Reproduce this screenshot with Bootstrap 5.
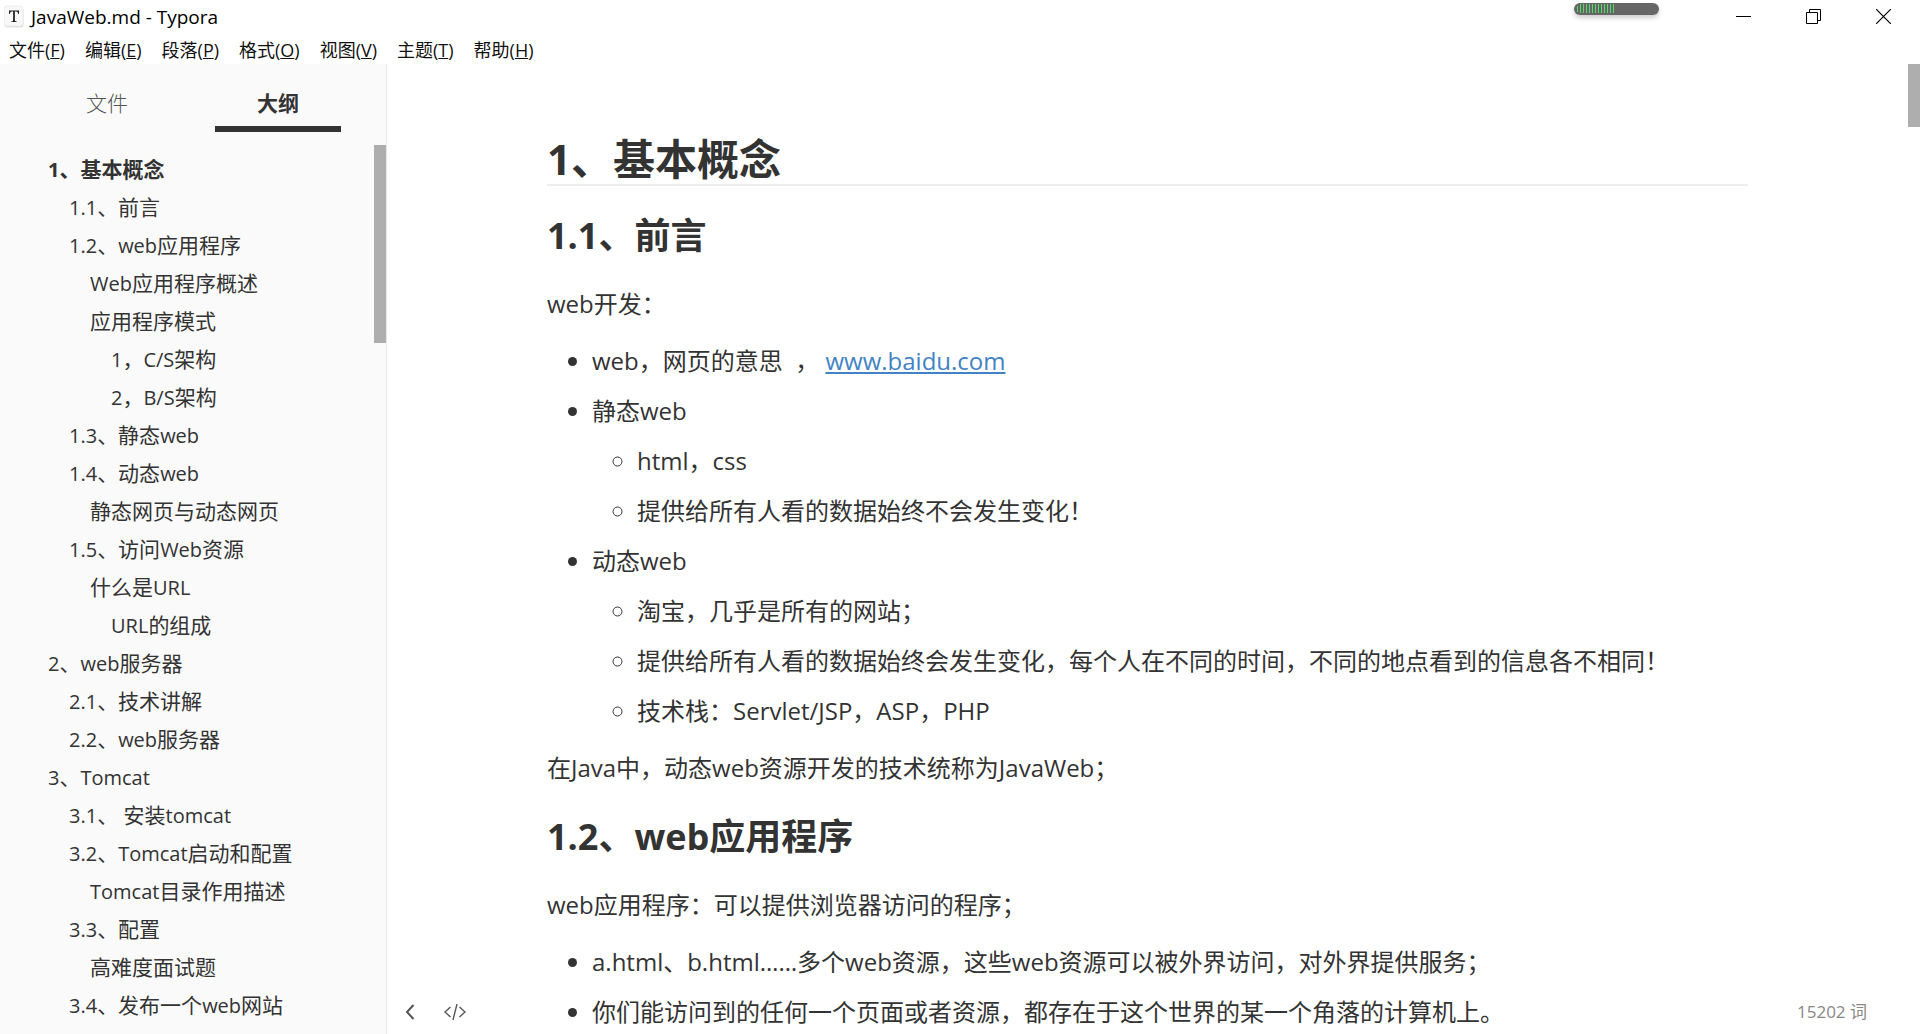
<!DOCTYPE html>
<html lang="zh-CN">
<head>
<meta charset="utf-8">
<meta name="viewport" content="width=device-width, initial-scale=1">
<title>JavaWeb.md - Typora</title>
<link href="https://cdn.jsdelivr.net/npm/bootstrap@5.3.0/dist/css/bootstrap.min.css" rel="stylesheet">
<style>
  body { font-family: "Open Sans", "Noto Sans CJK SC", sans-serif; color: #333; background: #fff; }
  .title-bar { height: 34px; color: #000; padding-right: 2px; }
  .title-text { font-size: 19px; line-height: 34px; margin-left: 6px; }
  .win-btn { width: 70px; height: 32px; border: 0; background: none; padding: 0; color: #000; }
  .win-btn svg, .foot-btn svg { display: block; margin: auto; }
  .battery { top: 3px; right: 261px; width: 85px; height: 12px; border-radius: 6px; background: #666; box-shadow: 0 3px 5px rgba(0,0,0,.2); }
  .battery svg { display: block; }
  .menu-bar { height: 30px; padding-left: 9px; gap: 20px; }
  .menu-bar button { border: 0; background: none; padding: 0; font-size: 18px; line-height: 32px; color: #111; }
  .side { width: 387px; background: #fafafa; border-right: 1px solid #e7e7e7; }
  .side-tabs { height: 68px; padding: 0 45px 0 44px; justify-content: space-between; }
  .side-tabs button { width: 126px; border: 0; border-bottom: 6px solid transparent; background: none; padding: 17px 0 0; font-size: 21px; color: #555; font-weight: 300; }
  .side-tabs button.active { border-color: #333; color: #333; font-weight: 700; }
  .outline { padding: 18px 20px 0 48px; font-size: 21px; line-height: 38px; white-space: nowrap; }
  .outline a { display: block; height: 38px; color: #333; text-decoration: none; }
  .outline a.active { font-weight: 700; }
  .outline .latin { font-size: 20px; }
  .lv2 { padding-left: 21px; }
  .lv3 { padding-left: 42px; }
  .lv4 { padding-left: 63px; }
  .thumb { width: 12px; background: #aeaeae; right: 0; }
  .thumb-side { top: 81px; height: 198px; }
  .thumb-main { top: 0; height: 63px; }
  .page { max-width: 1201px; margin: 0 auto; padding-top: 70px; font-size: 24px; line-height: 38px; }
  .scroller { padding-right: 12px; }
  .page h1 { font-size: 42px; line-height: 50px; font-weight: 700; border-bottom: 2px solid #eee; margin: 0 0 27px; }
  .page h2 { font-size: 36px; line-height: 45px; font-weight: 700; margin: 27px 0; }
  .page p { margin: 19px 0; }
  .page ul { margin: 19px 0; padding-left: 45px; }
  .page ul ul, .page li + li { margin: 12px 0 0; }
  .page a { color: #4183c4; }
  .foot-left { left: 0; bottom: 0; height: 44px; }
  .foot-btn { width: 45px; height: 44px; border: 0; background: none; padding: 0; color: #555; }
  .foot-count { right: 53px; bottom: 0; font-size: 17px; line-height: 44px; color: #888; border: 0; background: none; padding: 0; }
</style>
<script src="https://cdn.jsdelivr.net/npm/bootstrap@5.3.0/dist/js/bootstrap.bundle.min.js"></script>
</head>
<body>
<div class="d-flex flex-column vh-100 overflow-hidden">
  <header class="position-relative">
    <div class="title-bar d-flex">
      <svg class="ms-1 mt-1" width="21" height="26" viewBox="0 -2 21 26" aria-hidden="true">
        <rect x="0.500" y="1.500" width="19" height="20" rx="3" fill="#ddd"/>
        <rect x="0" y="0" width="19" height="20" rx="3" fill="#f8f8f8" stroke="#ececec"/>
        <path d="M5 4.500h10v3.500h-.8c-.3-1.700-.7-2.600-2-2.600H10.900v8.800c0 .8.400 1 1.700 1.100v.7H7.400v-.7c1.300-.1 1.700-.3 1.700-1.100V5.400H7.800c-1.300 0-1.700.9-2 2.600H5z" fill="#222"/>
      </svg>
      <span class="title-text">JavaWeb.md - Typora</span>
      <div class="d-flex ms-auto">
        <button class="win-btn" aria-label="最小化"><svg width="15" height="15"><path d="M0 7.500h15" stroke="#000"/></svg></button>
        <button class="win-btn" aria-label="还原"><svg width="15" height="15" fill="none" stroke="#000"><path d="M.5 3.500h11v11H.5zM3.500 3.500v-3h11v11h-3"/></svg></button>
        <button class="win-btn" aria-label="关闭"><svg width="15" height="15"><path d="M0 0l15 15M15 0L0 15" stroke="#000" stroke-width="1.200"/></svg></button>
      </div>
    </div>
    <div class="battery position-absolute">
      <svg width="85" height="12"><path d="M3.500 3v6M6.500 1v9M9.500 1v9M12.500 1v9M15.500 1v9M18.500 1v9M21.500 1v9M24.500 1v9M27.500 1v9M30.500 1v9M33.500 1v9M36.500 1v9M39.500 1v9" stroke="#4fdc68"/></svg>
    </div>
    <nav class="menu-bar d-flex">
      <button>文件(<u>F</u>)</button>
      <button>编辑(<u>E</u>)</button>
      <button>段落(<u>P</u>)</button>
      <button>格式(<u>O</u>)</button>
      <button>视图(<u>V</u>)</button>
      <button>主题(<u>T</u>)</button>
      <button>帮助(<u>H</u>)</button>
    </nav>
  </header>
  <div class="d-flex flex-grow-1 overflow-hidden">
    <aside class="side position-relative flex-shrink-0 overflow-hidden">
      <div class="side-tabs d-flex">
        <button>文件</button>
        <button class="active">大纲</button>
      </div>
      <nav class="outline">
        <a href="#s1" class="active"><span class="latin">1</span>、基本概念</a>
        <a href="#s11" class="lv2"><span class="latin">1.1</span>、前言</a>
        <a href="#s12" class="lv2"><span class="latin">1.2</span>、<span class="latin">web</span>应用程序</a>
        <a href="#" class="lv3"><span class="latin">Web</span>应用程序概述</a>
        <a href="#" class="lv3">应用程序模式</a>
        <a href="#" class="lv4"><span class="latin">1</span>，<span class="latin">C/S</span>架构</a>
        <a href="#" class="lv4"><span class="latin">2</span>，<span class="latin">B/S</span>架构</a>
        <a href="#" class="lv2"><span class="latin">1.3</span>、静态<span class="latin">web</span></a>
        <a href="#" class="lv2"><span class="latin">1.4</span>、动态<span class="latin">web</span></a>
        <a href="#" class="lv3">静态网页与动态网页</a>
        <a href="#" class="lv2"><span class="latin">1.5</span>、访问<span class="latin">Web</span>资源</a>
        <a href="#" class="lv3">什么是<span class="latin">URL</span></a>
        <a href="#" class="lv4"><span class="latin">URL</span>的组成</a>
        <a href="#"><span class="latin">2</span>、<span class="latin">web</span>服务器</a>
        <a href="#" class="lv2"><span class="latin">2.1</span>、技术讲解</a>
        <a href="#" class="lv2"><span class="latin">2.2</span>、<span class="latin">web</span>服务器</a>
        <a href="#"><span class="latin">3</span>、<span class="latin">Tomcat</span></a>
        <a href="#" class="lv2"><span class="latin">3.1</span>、 安装<span class="latin">tomcat</span></a>
        <a href="#" class="lv2"><span class="latin">3.2</span>、<span class="latin">Tomcat</span>启动和配置</a>
        <a href="#" class="lv3"><span class="latin">Tomcat</span>目录作用描述</a>
        <a href="#" class="lv2"><span class="latin">3.3</span>、配置</a>
        <a href="#" class="lv3">高难度面试题</a>
        <a href="#" class="lv2"><span class="latin">3.4</span>、发布一个<span class="latin">web</span>网站</a>
      </nav>
      <div class="thumb thumb-side position-absolute"></div>
    </aside>
    <main class="position-relative flex-grow-1 overflow-hidden">
      <div class="scroller">
        <article class="page">
          <h1 id="s1">1、基本概念</h1>
          <h2 id="s11">1.1、前言</h2>
          <p>web开发：</p>
          <ul>
            <li>web，网页的意思&nbsp; ， <a href="#">www.baidu.com</a></li>
            <li>静态web
              <ul>
                <li>html，css</li>
                <li>提供给所有人看的数据始终不会发生变化！</li>
              </ul>
            </li>
            <li>动态web
              <ul>
                <li>淘宝，几乎是所有的网站；</li>
                <li>提供给所有人看的数据始终会发生变化，每个人在不同的时间，不同的地点看到的信息各不相同！</li>
                <li>技术栈：Servlet/JSP，ASP，PHP</li>
              </ul>
            </li>
          </ul>
          <p>在Java中，动态web资源开发的技术统称为JavaWeb；</p>
          <h2 id="s12">1.2、web应用程序</h2>
          <p>web应用程序：可以提供浏览器访问的程序；</p>
          <ul>
            <li>a.html、b.html……多个web资源，这些web资源可以被外界访问，对外界提供服务；</li>
            <li>你们能访问到的任何一个页面或者资源，都存在于这个世界的某一个角落的计算机上。</li>
          </ul>
        </article>
      </div>
      <div class="thumb thumb-main position-absolute"></div>
      <div class="foot-left position-absolute d-flex">
        <button class="foot-btn" aria-label="隐藏侧边栏"><svg width="10" height="16" fill="none" stroke="#555" stroke-width="2"><path d="M8.500 1L2 8l6.500 7"/></svg></button>
        <button class="foot-btn" aria-label="源代码模式"><svg width="22" height="16" fill="none" stroke="#555" stroke-width="1.400"><path d="M6.500 3L1 8l5.500 5M15.500 3L21 8l-5.500 5M13 0L9 16"/></svg></button>
      </div>
      <button class="foot-count position-absolute">15202 词</button>
    </main>
  </div>
</div>
</body>
</html>
